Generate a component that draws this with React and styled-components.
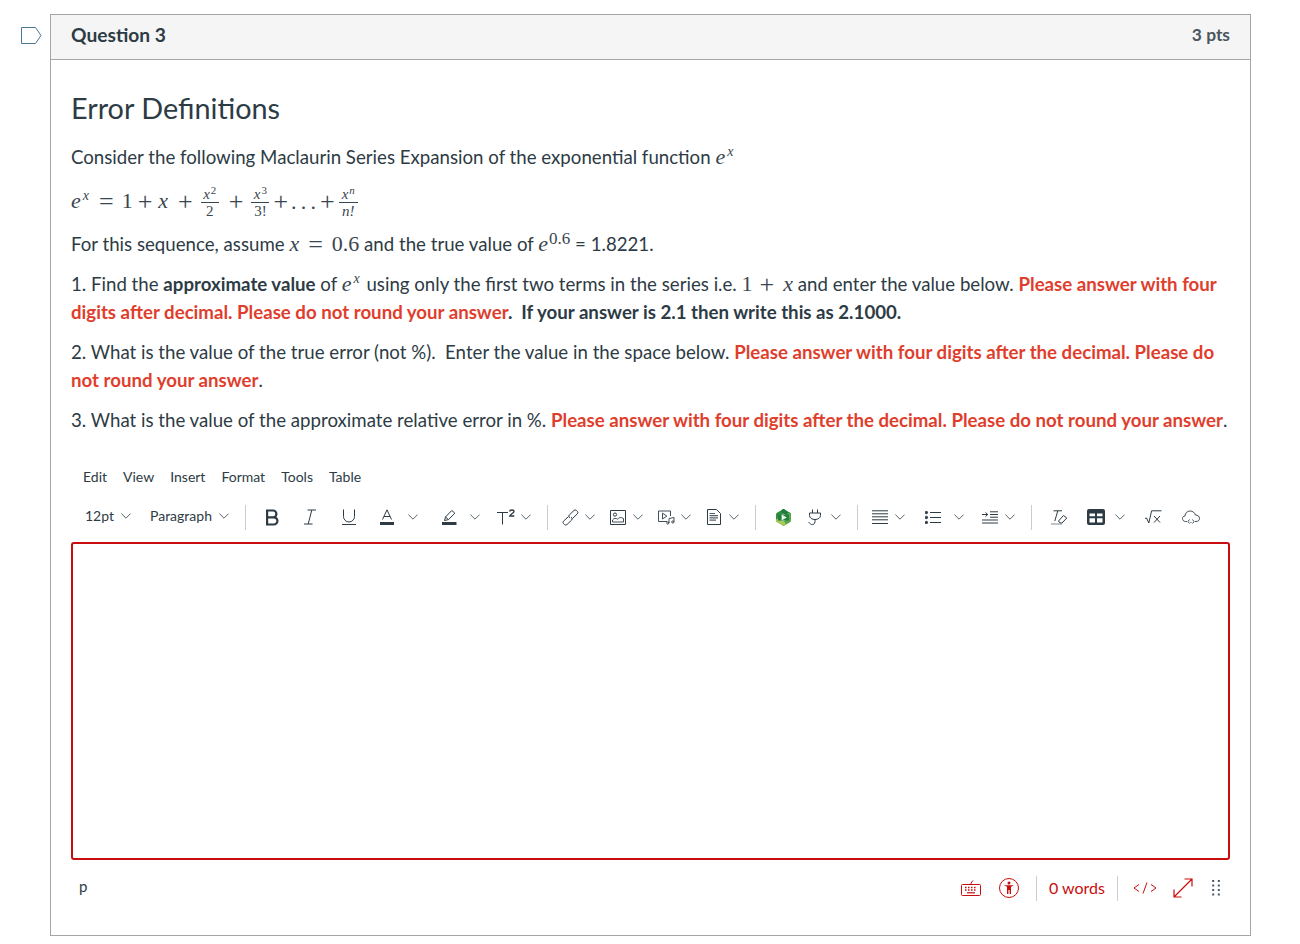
import React from 'react';
import styled, { createGlobalStyle } from 'styled-components';

const ink = '#2d3b45';
const red = '#e03e2d';
const alert = '#c70d0d';

const Global = createGlobalStyle`
  html, body {
    margin: 0;
    padding: 0;
    background: #fff;
  }
  body {
    font-family: Lato, 'Open Sans', sans-serif;
    color: ${ink};
  }
`;

const Page = styled.div`
  display: flex;
  align-items: flex-start;
  width: 1300px;
  height: 944px;
  padding-top: 14px;
  box-sizing: border-box;
  overflow: hidden;
`;

const FlagSlot = styled.div`
  width: 50px;
  flex: none;
  padding: 13px 0 0 21px;
  box-sizing: border-box;
`;

const Card = styled.section`
  width: 1201px;
  height: 922px;
  box-sizing: border-box;
  border: 1px solid #a5a5a5;
  display: flex;
  flex-direction: column;
`;

const CardHeader = styled.header`
  height: 45px;
  flex: none;
  box-sizing: border-box;
  border-bottom: 1px solid #a5a5a5;
  background: #f5f5f5;
  display: flex;
  align-items: center;
  justify-content: space-between;
  padding: 0 20px 6px;
  font-size: 19.2px;
  font-weight: 700;
`;

const Points = styled.span`
  font-size: 17.4px;
  color: #4a5660;
`;

const CardBody = styled.div`
  flex: 1;
  padding: 29px 20px 0;
  display: flex;
  flex-direction: column;
`;

const Title = styled.h2`
  margin: 0 0 16px;
  font-size: 28.8px;
  line-height: 38px;
  font-weight: 400;
`;

const Para = styled.p`
  margin: 0 0 12px;
  font-size: 18.67px;
  line-height: 28px;
  white-space: nowrap;
`;

const Strong = styled.strong`
  font-weight: 700;
  color: ${(p) => (p.$red ? red : ink)};
`;

const Math = styled.span`
  font-family: 'Liberation Serif', serif;
  font-size: 22px;
  line-height: 1;
  color: #3a464f;
  white-space: pre;
`;

const MathVar = styled.i`
  font-family: 'Liberation Serif', serif;
`;

const Op = styled.span`
  font-size: 26px;
  line-height: 0;
  vertical-align: -2px;
  margin: 0 ${(p) => p.$r ?? 7}px 0 ${(p) => p.$l ?? 7}px;
`;

const Dots = styled.span`
  letter-spacing: 4.2px;
  display: inline-block;
  width: 24px;
  vertical-align: -1px;
`;

const Sup = styled.sup`
  font-size: ${(p) => p.$size || 14}px;
  line-height: 0;
  margin: 0 ${(p) => p.$after || 0}px 0 ${(p) => p.$before ?? 2}px;
  vertical-align: ${(p) => p.$lift || 8}px;
`;

const Frac = styled.span`
  display: inline-flex;
  flex-direction: column;
  align-items: center;
  width: ${(p) => p.$w}px;
  vertical-align: 9px;
  font-size: 15px;
  line-height: 16px;
`;

const FracTop = styled.span`
  display: block;
  border-bottom: 1px solid #3a464f;
  align-self: stretch;
  text-align: center;
`;

const FormulaRow = styled(Para)`
  height: 36px;
  line-height: 36px;
  margin-bottom: 11px;
`;

const Editor = styled.div`
  margin-top: 14px;
  display: flex;
  flex-direction: column;
`;

const MenuBar = styled.nav`
  display: flex;
  gap: 16px;
  padding: 0 0 1px 12px;
  height: 34px;
  box-sizing: border-box;
  align-items: center;
  font-size: 14px;
`;

const ToolBar = styled.div`
  display: flex;
  align-items: center;
  height: 40px;
  margin-top: 3px;
  padding-left: 14px;
`;

const SelectBox = styled.div`
  width: ${(p) => p.$w}px;
  display: flex;
  align-items: center;
  gap: 7px;
  font-size: 14px;
  padding-bottom: 3px;
  box-sizing: border-box;
`;

const Sep = styled.span`
  width: 1px;
  height: 25px;
  flex: none;
  background: #c7cdd1;
`;

const Group = styled.div`
  display: flex;
  align-items: center;
  padding: ${(p) => p.$pad};
`;

const Tool = styled.div`
  width: ${(p) => p.$w}px;
  flex: none;
  display: flex;
  align-items: center;
  height: 24px;
`;

const IconSlot = styled.span`
  width: 38px;
  flex: none;
  display: flex;
  justify-content: center;
  align-items: center;
`;

const ChevronSlot = styled.span`
  display: flex;
  margin-left: ${(p) => p.$cx - 43}px;
`;

const EditArea = styled.div`
  margin-top: 5px;
  height: 318px;
  box-sizing: border-box;
  border: 2px solid ${alert};
  border-radius: 3px;
  background: #fff;
`;

const StatusBar = styled.footer`
  display: flex;
  align-items: center;
  height: 28px;
  margin-top: 14px;
  padding-left: 8px;
  color: ${alert};
`;

const PathLabel = styled.span`
  font-size: 15px;
  color: ${ink};
  margin-right: auto;
  padding-bottom: 5px;
`;

const StatusIcon = styled.span`
  display: flex;
  margin-right: ${(p) => p.$after}px;
`;

const StatusSep = styled(Sep)`
  margin-right: ${(p) => p.$after}px;
`;

const Words = styled.span`
  font-size: 16px;
  margin-right: 12px;
  padding-bottom: 2px;
`;

const Chevron = () => (
  <svg width="10" height="6" viewBox="0 0 10 6" fill="none" stroke={ink} strokeWidth="0.8">
    <path d="M0.4 0.6 5 5.2 9.6 0.6" />
  </svg>
);

const Flag = () => (
  <svg width="21" height="17" viewBox="0 0 21 17" fill="none" stroke="#4a7696" strokeWidth="1">
    <path d="M0.5 0.5H14.5L20 8.5 14.5 16.5H0.5Z" />
  </svg>
);

const Bold = () => (
  <svg width="16" height="17" viewBox="0 0 16 17" fill="none" stroke={ink} strokeWidth="2.2">
    <path d="M3 1.5H9a3.4 3.4 0 0 1 0 6.8H3M3 8.3H9.8a3.6 3.6 0 0 1 0 7.2H3M3.1 .4V16.6" />
  </svg>
);

const Italic = () => (
  <svg width="14" height="16" viewBox="0 0 14 16" fill="none" stroke={ink} strokeWidth="1">
    <path d="M4.5 1H13M1 15H9.5M8.8 1 5.2 15" />
  </svg>
);

const Underline = () => (
  <svg width="14" height="16" viewBox="0 0 14 16" fill="none" stroke={ink} strokeWidth="1">
    <path d="M1.5 .5V7.5a5.5 5.5 0 0 0 11 0V.5M0 15.5H14" />
  </svg>
);

const TextColor = () => (
  <svg width="14" height="16" viewBox="0 0 14 16" fill="none" stroke={ink} strokeWidth="1">
    <path d="M2.5 10.5 7 .8 11.5 10.5M4 7.5H10" />
    <path d="M0 14.5H14" strokeWidth="3" />
  </svg>
);

const Highlight = () => (
  <svg width="16" height="16" viewBox="0 0 16 16" fill="none" stroke={ink} strokeWidth="1">
    <path d="M3.5 11.5 4.5 8 10.8 1.5 13.8 4.2 7.5 10.6Z" />
    <path d="M4.5 8 7.5 10.6" />
    <path d="M1 14.5H15.5" strokeWidth="3" />
  </svg>
);

const Superscript = () => (
  <svg width="18" height="16" viewBox="0 0 18 16" fill="none" stroke={ink} strokeWidth="1">
    <path d="M0 3.5H11M5.5 3.5V15.5" />
    <path d="M12.5 2.5C13 .5 17 .5 17 2.5 17 4 13.5 5 12.8 7H17.3" strokeWidth="1.3" />
  </svg>
);

const LinkIcon = () => (
  <svg width="17" height="17" viewBox="0 0 17 17" fill="none" stroke={ink} strokeWidth="1">
    <path d="M6.5 7.5 1.5 12.2a1.7 1.7 0 0 0 0 2.3L2.6 15.6a1.7 1.7 0 0 0 2.3 0L9.7 11a1.7 1.7 0 0 0 0-2.3L9 8" />
    <path d="M10.5 9.5 15.4 4.8a1.7 1.7 0 0 0 0-2.3L14.3 1.4a1.7 1.7 0 0 0-2.3 0L7.3 6a1.7 1.7 0 0 0 0 2.3L8 9" />
  </svg>
);

const ImageIcon = () => (
  <svg width="16" height="15" viewBox="0 0 16 15" fill="none" stroke={ink} strokeWidth="1">
    <path d="M.5 .5H15.5V14.5H.5Z" />
    <circle cx="5" cy="4.6" r="1.6" />
    <path d="M2.5 12V10C4 8 6 8 7.5 9.2 9 7.5 11 6.8 13.5 8.5V12Z" strokeWidth="0.9" />
  </svg>
);

const MediaIcon = () => (
  <svg width="17" height="15" viewBox="0 0 17 15" fill="none" stroke={ink} strokeWidth="0.9">
    <path d="M9 11.5H.5V1H12.5V6" />
    <path d="M4.5 3.2V9L8.8 6.1Z" />
    <path d="M11 13V8.5L16 7.5V12" />
    <circle cx="9.8" cy="13" r="1.1" />
    <circle cx="14.8" cy="12" r="1.1" />
  </svg>
);

const DocIcon = () => (
  <svg width="14" height="16" viewBox="0 0 14 16" fill="none" stroke={ink} strokeWidth="1">
    <path d="M.5 .5H9.5L13.5 4.5V15.5H.5Z" />
    <path d="M2.5 4.5H8M2.5 6.7H11M2.5 8.9H11M2.5 11.1H9" strokeWidth="1.2" stroke="#55626b" />
  </svg>
);

const StudioLogo = () => (
  <svg width="17" height="17" viewBox="0 0 17 17" fill="none" strokeWidth="4" strokeLinejoin="round" strokeLinecap="round">
    <path d="M3 11.6V5.4L8.5 2.2" stroke="#2f8f45" />
    <path d="M8.5 2.2 14 5.4" stroke="#1f7a3d" />
    <path d="M14 5.4V11.6L8.5 14.8" stroke="#5aa64c" />
    <path d="M8.5 14.8 3 11.6" stroke="#a5c95a" />
    <path d="M3 5.4H14V11.6H3Z" fill="#23803f" stroke="none" />
    <path d="M6.6 5.4 11.8 8.5 6.6 11.6Z" fill="#eef5e6" stroke="none" />
  </svg>
);

const PlugIcon = () => (
  <svg width="14" height="17" viewBox="0 0 14 17" fill="none" stroke={ink} strokeWidth="1">
    <path d="M4.5 .5V4M9.5 .5V4M1.5 4H12.5V6.5C12.5 9 10 10.5 7 10.5S1.5 9 1.5 6.5Z" />
    <path d="M7 10.5V12.5C7 15 5 16 3.5 15.5 2 15 1.5 13.5 .5 13.5" />
  </svg>
);

const AlignIcon = () => (
  <svg width="16" height="15" viewBox="0 0 16 15" fill="none" stroke={ink} strokeWidth="1">
    <path d="M0 .8H16M0 3.8H16M0 6.8H16M0 9.8H16M0 13.5H16" />
  </svg>
);

const ListIcon = () => (
  <svg width="16" height="13" viewBox="0 0 16 13" fill="none" stroke={ink} strokeWidth="1">
    <path d="M5 1.5H16M5 6.5H16M5 11.5H16" />
    <circle cx="1.4" cy="1.5" r="1.2" fill={ink} />
    <circle cx="1.4" cy="6.5" r="1.2" fill={ink} />
    <circle cx="1.4" cy="11.5" r="1.2" fill={ink} />
  </svg>
);

const IndentIcon = () => (
  <svg width="16" height="13" viewBox="0 0 16 13" fill="none" stroke={ink} strokeWidth="1">
    <path d="M0 3.5H5.5M3.5 1.5 5.8 3.5 3.5 5.5M8 .8H16M8 3.5H16M8 6.2H16M0 9H16M0 12H16" />
  </svg>
);

const ClearIcon = () => (
  <svg width="17" height="15" viewBox="0 0 17 15" fill="none" stroke={ink} strokeWidth="1">
    <path d="M2.5 .8H11M6.8 .8 3.8 11" />
    <path d="M7.5 11 12.5 5.5 15.8 8 11 13H9Z" />
    <path d="M0 14H11" stroke="#7b868e" />
  </svg>
);

const TableIcon = () => (
  <svg width="18" height="16" viewBox="0 0 18 16">
    <path
      fill={ink}
      fillRule="evenodd"
      d="M2 0H16a2 2 0 0 1 2 2V14a2 2 0 0 1-2 2H2a2 2 0 0 1-2-2V2A2 2 0 0 1 2 0ZM2.5 4.5V7.3H8V4.5ZM10 4.5V7.3H15.5V4.5ZM2.5 9.2V13.5H8V9.2ZM10 9.2V13.5H15.5V9.2Z"
    />
  </svg>
);

const SqrtIcon = () => (
  <svg width="17" height="14" viewBox="0 0 17 14" fill="none" stroke={ink} strokeWidth="1">
    <path d="M0 8.5 1.6 8 3.8 13 6.6 .8H16.5" />
    <path d="M9 6 15 12.5M15 6 9 12.5" />
  </svg>
);

const CloudIcon = () => (
  <svg width="18" height="15" viewBox="0 0 18 15" fill="none" stroke={ink} strokeWidth="0.9">
    <path d="M5 11.5H3.5C1.5 11.5 .5 10 .5 8.5S1.5 6 3 6C3 3 5.5 1 8 1S12.8 2.5 13.3 5C15.5 5 17.5 6.3 17.5 8.4S16 11.5 14 11.5H13" />
    <path d="M7.5 9.5 6 11.5 7.5 13.5M10.5 9.5 12 11.5 10.5 13.5" />
    <path d="M9 12V14" strokeDasharray="1 1" />
  </svg>
);

const KeyboardIcon = () => (
  <svg width="20" height="16" viewBox="0 0 20 16" fill="none" stroke={alert} strokeWidth="1">
    <path d="M1.5 4.5H18.5a1 1 0 0 1 1 1V14.5a1 1 0 0 1-1 1H1.5a1 1 0 0 1-1-1V5.5a1 1 0 0 1 1-1Z" />
    <path d="M10 4.5V3L12 .5" />
    <path d="M4 7.5H16M4 10H16" strokeWidth="1.4" strokeDasharray="1.5 1.5" />
    <path d="M6 12.8H14" strokeWidth="1.2" />
  </svg>
);

const AccessIcon = () => (
  <svg width="20" height="20" viewBox="0 0 20 20" fill="none" stroke={alert} strokeWidth="1">
    <circle cx="10" cy="10" r="9.5" />
    <circle cx="10" cy="5" r="1.5" fill={alert} stroke="none" />
    <path d="M5 7.2H15L12 8.8V16H10.6V12H9.4V16H8V8.8Z" fill={alert} stroke="none" />
  </svg>
);

const CodeIcon = () => (
  <svg width="24" height="12" viewBox="0 0 24 12" fill="none" stroke={alert} strokeWidth="1">
    <path d="M6 2.5 1 6 6 9.5M18 2.5 23 6 18 9.5M14 .5 10 11.5" />
  </svg>
);

const ExpandIcon = () => (
  <svg width="20" height="20" viewBox="0 0 20 20" fill="none" stroke={alert} strokeWidth="1.2">
    <path d="M1 19 19 1M11.5 1H19V8.5M1 11.5V19H8.5" />
  </svg>
);

const GripIcon = () => (
  <svg width="8" height="16" viewBox="0 0 8 16" fill="#4a5660">
    {[1, 5.5, 10, 14.5].map((y) => (
      <React.Fragment key={y}>
        <rect x="0.2" y={y - 1} width="2" height="2" />
        <rect x="5.8" y={y - 1} width="2" height="2" />
      </React.Fragment>
    ))}
  </svg>
);

const groups = [
  {
    pad: '0 0 0 7px',
    tools: [
      { Icon: Bold, w: 38 },
      { Icon: Italic, w: 39 },
      { Icon: Underline, w: 38 },
      { Icon: TextColor, w: 62, cx: 45 },
      { Icon: Highlight, w: 57, cx: 45 },
      { Icon: Superscript, w: 60, cx: 39 },
    ],
  },
  {
    pad: '0 12px 0 3px',
    tools: [
      { Icon: LinkIcon, w: 48, cx: 39 },
      { Icon: ImageIcon, w: 48, cx: 39 },
      { Icon: MediaIcon, w: 48, cx: 39 },
      { Icon: DocIcon, w: 48, cx: 39 },
    ],
  },
  {
    pad: '0 0 0 8px',
    tools: [
      { Icon: StudioLogo, w: 32 },
      { Icon: PlugIcon, w: 61, cx: 40 },
    ],
  },
  {
    pad: '0 0 0 3px',
    tools: [
      { Icon: AlignIcon, w: 53, cx: 39 },
      { Icon: ListIcon, w: 57, cx: 45 },
      { Icon: IndentIcon, w: 60, cx: 39 },
    ],
  },
  {
    pad: '0 0 0 8px',
    tools: [
      { Icon: ClearIcon, w: 37 },
      { Icon: TableIcon, w: 57, cx: 43 },
      { Icon: SqrtIcon, w: 38 },
      { Icon: CloudIcon, w: 38 },
    ],
  },
];

const ExpX = () => (
  <Math>
    <MathVar>e</MathVar>
    <Sup $after={2}>
      <MathVar>x</MathVar>
    </Sup>
  </Math>
);

const Toolbar = () => (
  <ToolBar>
    <SelectBox $w={65}>
      12pt <Chevron />
    </SelectBox>
    <SelectBox $w={95}>
      Paragraph <Chevron />
    </SelectBox>
    {groups.map((group, i) => (
      <React.Fragment key={i}>
        <Sep />
        <Group $pad={group.pad}>
          {group.tools.map(({ Icon, w, cx }, j) => (
            <Tool key={j} $w={w}>
              <IconSlot>
                <Icon />
              </IconSlot>
              {cx && (
                <ChevronSlot $cx={cx}>
                  <Chevron />
                </ChevronSlot>
              )}
            </Tool>
          ))}
        </Group>
      </React.Fragment>
    ))}
  </ToolBar>
);

const FracPower = ({ children }) => (
  <Sup $size={11} $lift={5} $before={1}>
    {children}
  </Sup>
);

const App = () => (
  <>
    <Global />
    <Page>
      <FlagSlot>
        <Flag />
      </FlagSlot>
      <Card>
        <CardHeader>
          <span>Question 3</span>
          <Points>3 pts</Points>
        </CardHeader>
        <CardBody>
          <Title>Error Definitions</Title>
          <Para>
            Consider the following Maclaurin Series Expansion of the exponential function <ExpX />
          </Para>
          <FormulaRow>
            <Math>
              <MathVar>e</MathVar>
              <Sup>
                <MathVar>x</MathVar>
              </Sup>
              <Op $l={10} $r={8}>=</Op>
              1
              <Op $l={5} $r={6}>+</Op>
              <MathVar>x</MathVar>
              <Op $l={10} $r={8}>+</Op>
              <Frac $w={18}>
                <FracTop>
                  <MathVar>x</MathVar>
                  <FracPower>2</FracPower>
                </FracTop>
                <span>2</span>
              </Frac>
              <Op $l={10} $r={8}>+</Op>
              <Frac $w={18}>
                <FracTop>
                  <MathVar>x</MathVar>
                  <FracPower>3</FracPower>
                </FracTop>
                <span>3!</span>
              </Frac>
              <Op $l={4} $r={3}>+</Op>
              <Dots>...</Dots>
              <Op $l={5} $r={4}>+</Op>
              <Frac $w={19}>
                <FracTop>
                  <MathVar>x</MathVar>
                  <FracPower>
                    <MathVar>n</MathVar>
                  </FracPower>
                </FracTop>
                <MathVar>n!</MathVar>
              </Frac>
            </Math>
          </FormulaRow>
          <Para>
            For this sequence, assume{' '}
            <Math>
              <MathVar>x</MathVar>
              <Op $l={9} $r={9}>=</Op>
              0.6
            </Math>{' '}
            and the true value of{' '}
            <Math>
              <MathVar>e</MathVar>
              <Sup $size={17} $lift={7} $before={1}>0.6</Sup>
            </Math>{' '}
            = 1.8221.
          </Para>
          <Para>
            1. Find the <Strong>approximate value</Strong> of <ExpX /> using only the first two terms in the series i.e.{' '}
            <Math>
              1
              <Op $l={7} $r={9}>+</Op>
              <MathVar>x</MathVar>
            </Math>{' '}
            and enter the value below. <Strong $red>Please answer with four</Strong>
            <br />
            <Strong $red>digits after decimal. Please do not round your answer</Strong>
            <Strong>.&nbsp; If your answer is 2.1 then write this as 2.1000.</Strong>
          </Para>
          <Para>
            2. What is the value of the true error (not %).&nbsp; Enter the value in the space below.{' '}
            <Strong $red>Please answer with four digits after the decimal. Please do</Strong>
            <br />
            <Strong $red>not round your answer</Strong>.
          </Para>
          <Para>
            3. What is the value of the approximate relative error in %.{' '}
            <Strong $red>Please answer with four digits after the decimal. Please do not round your answer</Strong>.
          </Para>
          <Editor>
            <MenuBar>
              <span>Edit</span>
              <span>View</span>
              <span>Insert</span>
              <span>Format</span>
              <span>Tools</span>
              <span>Table</span>
            </MenuBar>
            <Toolbar />
            <EditArea />
            <StatusBar>
              <PathLabel>p</PathLabel>
              <StatusIcon $after={18}>
                <KeyboardIcon />
              </StatusIcon>
              <StatusIcon $after={17}>
                <AccessIcon />
              </StatusIcon>
              <StatusSep $after={12} />
              <Words>0 words</Words>
              <StatusSep $after={15} />
              <StatusIcon $after={16}>
                <CodeIcon />
              </StatusIcon>
              <StatusIcon $after={19}>
                <ExpandIcon />
              </StatusIcon>
              <StatusIcon $after={10}>
                <GripIcon />
              </StatusIcon>
            </StatusBar>
          </Editor>
        </CardBody>
      </Card>
    </Page>
  </>
);

export default App;
